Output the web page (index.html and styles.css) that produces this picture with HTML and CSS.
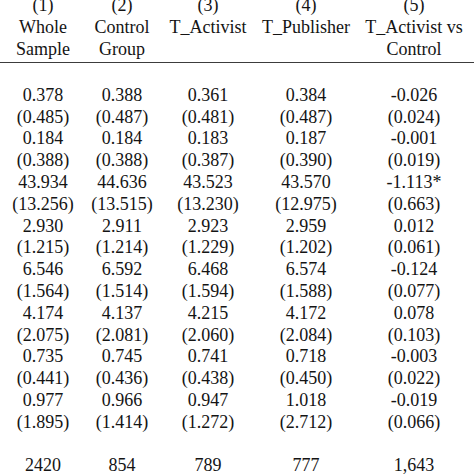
FILE: index.html
```html
<!DOCTYPE html>
<html>
<head>
<meta charset="utf-8">
<link rel="stylesheet" href="styles.css">
</head>
<body>
<div class="table">
  <div class="head">
    <div class="hc">(1)<br>Whole<br>Sample</div>
    <div class="hc">(2)<br>Control<br>Group</div>
    <div class="hc">(3)<br>T_Activist</div>
    <div class="hc">(4)<br>T_Publisher</div>
    <div class="hc">(5)<br>T_Activist vs<br>Control</div>
  </div>
  <div class="body">
    <div class="row empty"></div>
    <div class="row"><span>0.378</span><span>0.388</span><span>0.361</span><span>0.384</span><span>-0.026</span></div>
    <div class="row"><span>(0.485)</span><span>(0.487)</span><span>(0.481)</span><span>(0.487)</span><span>(0.024)</span></div>
    <div class="row"><span>0.184</span><span>0.184</span><span>0.183</span><span>0.187</span><span>-0.001</span></div>
    <div class="row"><span>(0.388)</span><span>(0.388)</span><span>(0.387)</span><span>(0.390)</span><span>(0.019)</span></div>
    <div class="row"><span>43.934</span><span>44.636</span><span>43.523</span><span>43.570</span><span>-1.113*</span></div>
    <div class="row"><span>(13.256)</span><span>(13.515)</span><span>(13.230)</span><span>(12.975)</span><span>(0.663)</span></div>
    <div class="row"><span>2.930</span><span>2.911</span><span>2.923</span><span>2.959</span><span>0.012</span></div>
    <div class="row"><span>(1.215)</span><span>(1.214)</span><span>(1.229)</span><span>(1.202)</span><span>(0.061)</span></div>
    <div class="row"><span>6.546</span><span>6.592</span><span>6.468</span><span>6.574</span><span>-0.124</span></div>
    <div class="row"><span>(1.564)</span><span>(1.514)</span><span>(1.594)</span><span>(1.588)</span><span>(0.077)</span></div>
    <div class="row"><span>4.174</span><span>4.137</span><span>4.215</span><span>4.172</span><span>0.078</span></div>
    <div class="row"><span>(2.075)</span><span>(2.081)</span><span>(2.060)</span><span>(2.084)</span><span>(0.103)</span></div>
    <div class="row"><span>0.735</span><span>0.745</span><span>0.741</span><span>0.718</span><span>-0.003</span></div>
    <div class="row"><span>(0.441)</span><span>(0.436)</span><span>(0.438)</span><span>(0.450)</span><span>(0.022)</span></div>
    <div class="row"><span>0.977</span><span>0.966</span><span>0.947</span><span>1.018</span><span>-0.019</span></div>
    <div class="row"><span>(1.895)</span><span>(1.414)</span><span>(1.272)</span><span>(2.712)</span><span>(0.066)</span></div>
    <div class="row empty"></div>
    <div class="row"><span>2420</span><span>854</span><span>789</span><span>777</span><span>1,643</span></div>
  </div>
</div>
</body>
</html>
```
FILE: styles.css
```css
html, body {
  margin: 0;
  padding: 0;
  background: #ffffff;
}
body {
  width: 474px;
  height: 474px;
  overflow: hidden;
  font-family: "Liberation Serif", "Times New Roman", serif;
  font-size: 18px;
  color: #141414;
}
.table {
  margin-top: -5px;
}
.head, .row {
  display: grid;
  grid-template-columns: 86px 72px 100px 96px 120px;
  text-align: center;
  line-height: 21.8px;
}
.head {
  height: 67px;
  border-bottom: 1.5px solid #3c3c3c;
  white-space: nowrap;
}
.row {
  height: 21.8px;
  white-space: nowrap;
}
```
